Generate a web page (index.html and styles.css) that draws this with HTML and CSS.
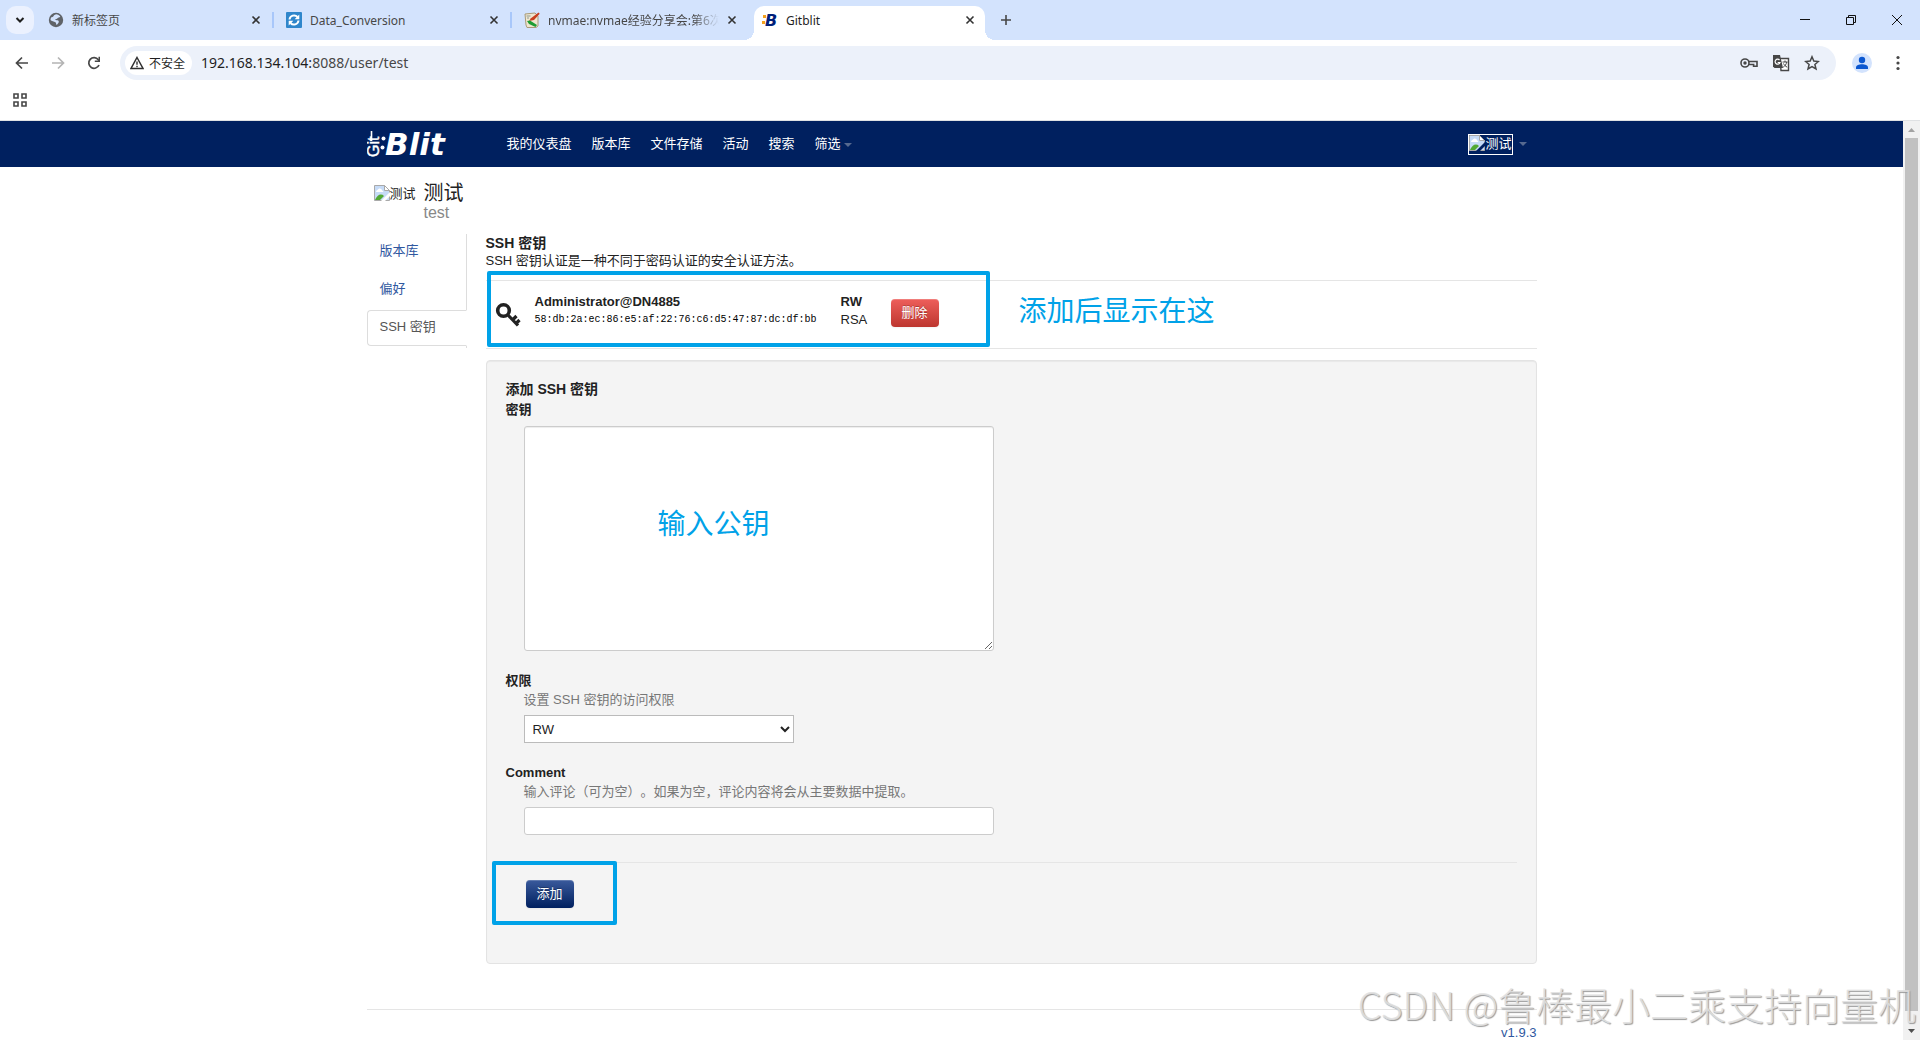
FILE: index.html
```html
<!DOCTYPE html>
<html lang="zh-CN">
<head>
    <meta charset="UTF-8">
    <meta name="viewport" content="width=device-width, initial-scale=1.0">
    <title>Gitblit</title>
    <link rel="stylesheet" href="styles.css">
</head>
<body>
    <!-- Browser window -->
    <div class="tab-strip">
        <button class="tab-search" aria-label="搜索标签页">
            <svg width="12" height="12" viewBox="0 0 12 12"><path d="M2.5 4l3.5 3.5L9.5 4" fill="none" stroke="#1f1f1f" stroke-width="2"/></svg>
        </button>
        <div class="tab">
            <svg width="16" height="16" viewBox="0 0 16 16"><circle cx="8" cy="8" r="7.2" fill="#5f6368"/><path d="M8 2.2c2 .3 3.400 1.200 4.300 2.300-.8 1.500-2.300.8-2.800 1.700-.4.900-1.900.6-2.500 1.300.8.900 2.600.4 3.500 1.300.9 1-.2 2.800-1.800 4.200-.8-.8-.4-2-1.300-2.700C6 9.500 3.500 9.300 2.500 8c0-1 .3-2 .8-2.800C5 5.500 5.500 4.200 6 3.300z" fill="#d3e3fd"/></svg>
            <span class="tab-title">新标签页</span>
            <button class="tab-close" aria-label="关闭"><svg width="10" height="10" viewBox="0 0 10 10"><path d="M1.500 1.500l7 7m0-7l-7 7"/></svg></button>
        </div>
        <div class="tab">
            <svg width="16" height="16" viewBox="0 0 16 16"><rect width="16" height="16" rx="1" fill="#2f86cb"/><path d="M3.500 7.500A4.600 4.600 0 0 1 11.500 5M12.500 8.500A4.600 4.600 0 0 1 4.500 11" fill="none" stroke="#fff" stroke-width="2"/><path d="M13.300 2.500v4.800H8.700zM2.700 13.500V8.700h4.600z" fill="#fff"/></svg>
            <span class="tab-title">Data_Conversion</span>
            <button class="tab-close" aria-label="关闭"><svg width="10" height="10" viewBox="0 0 10 10"><path d="M1.500 1.500l7 7m0-7l-7 7"/></svg></button>
        </div>
        <div class="tab before-active">
            <svg width="16" height="16" viewBox="0 0 16 16"><path d="M1 2l10-1 3 3v10l-2 1.500H3L2 13z" fill="#efe6cf" stroke="#a99b78"/><path d="M14.500.5l1.200 1.300L10 8l-5 1 2-2.800z" fill="#c8401f"/><path d="M3 9l3-.5 7 4.500-1.500 2L5 12z" fill="#1c9d35"/><path d="M2.500 4h4M3 6h2" stroke="#8c9a94"/></svg>
            <span class="tab-title fade">nvmae:nvmae经验分享会:第6次</span>
            <button class="tab-close" aria-label="关闭"><svg width="10" height="10" viewBox="0 0 10 10"><path d="M1.500 1.500l7 7m0-7l-7 7"/></svg></button>
        </div>
        <div class="tab active">
            <svg width="16" height="16" viewBox="0 0 16 16"><path d="M1 3h3v3H1zM0 9h3v3H0z" fill="#f5a11c"/><text x="3" y="14" class="favicon-letter">B</text></svg>
            <span class="tab-title">Gitblit</span>
            <button class="tab-close" aria-label="关闭"><svg width="10" height="10" viewBox="0 0 10 10"><path d="M1.500 1.500l7 7m0-7l-7 7"/></svg></button>
        </div>
        <button class="new-tab" aria-label="新标签页"><svg width="12" height="12" viewBox="0 0 12 12"><path d="M6 1v10M1 6h10" stroke="#474747" stroke-width="1.600"/></svg></button>
        <div class="window-buttons">
            <button aria-label="最小化"><svg width="12" height="12" viewBox="0 0 12 12"><path d="M1 5.500h10"/></svg></button>
            <button aria-label="还原"><svg width="12" height="12" viewBox="0 0 12 12"><path d="M1.500 3.500h7v7h-7zM3.500 3.500v-2h7v7h-2"/></svg></button>
            <button aria-label="关闭窗口"><svg width="12" height="12" viewBox="0 0 12 12"><path d="M1 1l10 10M11 1L1 11"/></svg></button>
        </div>
    </div>

    <div class="toolbar">
        <button aria-label="后退"><svg width="14" height="14" viewBox="0 0 14 14"><path d="M13 7H2M7 1.500L1.500 7 7 12.500" fill="none" stroke="#474747" stroke-width="1.700"/></svg></button>
        <button aria-label="前进"><svg width="14" height="14" viewBox="0 0 14 14"><path d="M1 7h11M7 1.500L12.500 7 7 12.500" fill="none" stroke="#b4b4b4" stroke-width="1.700"/></svg></button>
        <button aria-label="重新加载"><svg width="14" height="14" viewBox="0 0 14 14"><path d="M12 9A5.300 5.300 0 1 1 11.300 3.800L12.500 5" fill="none" stroke="#474747" stroke-width="1.700"/><path d="M13 .8V6H7.800V4.500h3.700V.8z" fill="#474747"/></svg></button>
        <div class="address-bar">
            <button class="security-chip">
                <svg width="14" height="14" viewBox="0 0 14 14"><path d="M7 1.500L13 12.500H1z" fill="none" stroke="#303030" stroke-width="1.500"/><path d="M7 5.500v3.300M7 9.800v1.400" stroke="#303030" stroke-width="1.400"/></svg>
                <span>不安全</span>
            </button>
            <span class="url">192.168.134.104:<span>8088/user/test</span></span>
            <div class="address-icons">
                <svg width="18" height="18" viewBox="0 0 18 18"><circle cx="5" cy="9" r="4" fill="none" stroke="#474747" stroke-width="1.600"/><circle cx="5" cy="9" r="1.700" fill="#474747"/><path d="M8.800 7.500H17v4.800h-3.400v-1.800h-4.800" fill="none" stroke="#474747" stroke-width="1.600"/></svg>
                <svg width="18" height="18" viewBox="0 0 18 18"><path d="M8 4.500h8.500v12H9z" fill="#fff" stroke="#474747" stroke-width="1.400"/><path d="M1 1h7l3 13H2.500L1 12.500z" fill="#474747"/><path d="M7.500 6A2.500 2.500 0 1 0 8 8.500H5.700" fill="none" stroke="#fff" stroke-width="1.200"/><path d="M10.500 8h5M13 6.500V8M14.800 8c-.5 2.300-1.800 4-3.600 5.200M11.500 9.500c.7 1.500 2 2.700 3.700 3.700" fill="none" stroke="#474747"/></svg>
                <svg width="16" height="16" viewBox="0 0 16 16"><path d="M8 1.800l1.800 4.300 4.600.4-3.500 3 1.100 4.500L8 11.600 4 14l1.100-4.500-3.500-3 4.600-.4z" fill="none" stroke="#474747" stroke-width="1.500"/></svg>
            </div>
        </div>
        <button class="avatar" aria-label="用户"><svg width="20" height="20" viewBox="0 0 20 20"><circle cx="10" cy="10" r="10" fill="#d3e3fd"/><circle cx="10" cy="7" r="3.200" fill="#0b57d0"/><path d="M4 16v-1.500c0-2 3-3.200 6-3.200s6 1.200 6 3.200V16z" fill="#0b57d0"/></svg></button>
        <button class="menu" aria-label="菜单"><svg width="4" height="16" viewBox="0 0 4 16" fill="#474747"><circle cx="2" cy="2.500" r="1.600"/><circle cx="2" cy="8" r="1.600"/><circle cx="2" cy="13.500" r="1.600"/></svg></button>
    </div>

    <div class="bookmarks">
        <svg width="14" height="14" viewBox="0 0 14 14"><path d="M1 1h4v4H1zM9 1h4v4H9zM1 9h4v4H1zM9 9h4v4H9z" fill="none" stroke="#474747" stroke-width="1.600"/></svg>
    </div>

    <div class="viewport">
        <div class="page">
            <div class="navbar">
                <div class="container">
                    <a class="brand" href="#" aria-label="GitBlit">
                        <svg width="82" height="30" viewBox="0 0 82 30">
                            <text class="brand-git" transform="translate(12 28) rotate(-90)">Git</text>
                            <path d="M4.500 2v10" stroke="#fff" stroke-width="1.600"/>
                            <circle cx="16.500" cy="9.500" r="2" fill="#fff"/>
                            <circle cx="15.500" cy="18.500" r="2" fill="#fff"/>
                            <text class="brand-blit" x="18" y="26">Blit</text>
                        </svg>
                    </a>
                    <nav>
                        <a href="#">我的仪表盘</a>
                        <a href="#">版本库</a>
                        <a href="#">文件存储</a>
                        <a href="#">活动</a>
                        <a href="#">搜索</a>
                        <a href="#">筛选<b class="caret"></b></a>
                    </nav>
                    <a class="user-menu" href="#">
                        <span class="user-image">
                            <svg width="16" height="16" viewBox="0 0 16 16"><path d="M.5.500h10l5 5v10H.500z" fill="#c6dbf7" stroke="#a9a9a9"/><path d="M2 7c0-2 2-2 2.500-3C6 3 8 4 8 5.500c1.500 0 1.500 1.500 1 1.500z" fill="#fff"/><path d="M1 15c2-5 6-7 9-4l-4 4z" fill="#52a934"/><path d="M16 7v4l-5 5H7z" fill="#00205f"/><path d="M10.500.500v5h5z" fill="#fff" stroke="#a9a9a9"/></svg>测试</span>
                        <b class="caret"></b>
                    </a>
                </div>
            </div>

            <div class="container">
                <div class="profile">
                    <div class="profile-image">
                        <svg width="16" height="16" viewBox="0 0 16 16"><path d="M.5.500h10l5 5v10H.500z" fill="#c6dbf7" stroke="#a9a9a9"/><path d="M2 7c0-2 2-2 2.500-3C6 3 8 4 8 5.500c1.500 0 1.500 1.500 1 1.500z" fill="#fff"/><path d="M1 15c2-5 6-7 9-4l-4 4z" fill="#52a934"/><path d="M16 7v4l-5 5H7z" fill="#fff"/><path d="M10.500.500v5h5z" fill="#fff" stroke="#a9a9a9"/></svg>测试</div>
                    <div>
                        <div class="display-name">测试</div>
                        <div class="username">test</div>
                    </div>
                </div>

                <div class="columns">
                    <div class="side-tabs">
                        <a href="#">版本库</a>
                        <a href="#">偏好</a>
                        <a class="current" href="#">SSH 密钥</a>
                    </div>

                    <div class="main">
                        <h4>SSH 密钥</h4>
                        <p>SSH 密钥认证是一种不同于密码认证的安全认证方法。</p>

                        <div class="keys">
                            <table>
                                <tr>
                                    <td class="key-icon"><svg width="26" height="26" viewBox="0 0 26 26"><circle cx="8.500" cy="8.500" r="5.800" fill="none" stroke="#222" stroke-width="3.600"/><path d="M12.500 12.500l10.500 11M17.500 18l4-4M21 21.500l3.500-3.500" fill="none" stroke="#222" stroke-width="3.200"/></svg></td>
                                    <td class="key-name"><strong>Administrator@DN4885</strong><code>58:db:2a:ec:86:e5:af:22:76:c6:d5:47:87:dc:df:bb</code></td>
                                    <td class="key-type"><strong>RW</strong><span>RSA</span></td>
                                    <td class="key-action"><button class="btn btn-danger">删除</button></td>
                                </tr>
                            </table>
                            <div class="mark mark-key"></div>
                            <div class="note note-key">添加后显示在这</div>
                        </div>

                        <form class="well">
                            <h4>添加 SSH 密钥</h4>
                            <div class="field">
                                <label for="key">密钥</label>
                                <div class="controls">
                                    <textarea id="key"></textarea>
                                    <div class="note note-input">输入公钥</div>
                                </div>
                            </div>
                            <div class="field">
                                <label for="permission">权限</label>
                                <div class="controls">
                                    <span class="help">设置 SSH 密钥的访问权限</span>
                                    <select id="permission"><option>RW</option></select>
                                </div>
                            </div>
                            <div class="field">
                                <label for="comment">Comment</label>
                                <div class="controls">
                                    <span class="help">输入评论（可为空）。如果为空，评论内容将会从主要数据中提取。</span>
                                    <input id="comment" type="text">
                                </div>
                            </div>
                            <div class="form-actions">
                                <button class="btn btn-primary" type="button">添加</button>
                                <div class="mark mark-add"></div>
                            </div>
                        </form>
                    </div>
                </div>

                <footer><a href="#">v1.9.3</a></footer>
            </div>
        </div>

        <div class="scrollbar">
            <svg width="17" height="17" viewBox="0 0 17 17"><path d="M5 11l3.500-4 3.500 4z" fill="#a3a3a3"/></svg>
            <div class="thumb"></div>
            <svg class="down" width="17" height="17" viewBox="0 0 17 17"><path d="M5 6l3.500 4L12 6z" fill="#505050"/></svg>
        </div>
    </div>

    <div class="watermark">CSDN @鲁棒最小二乘支持向量机</div>
</body>
</html>
```
FILE: styles.css
```css
/* Global Styles */
* {
    box-sizing: border-box;
}

body {
    margin: 0;
    height: 100vh;
    display: flex;
    flex-direction: column;
    overflow: hidden;
    position: relative;
    background: #fff;
    color: #222;
    font: 13px/18px "Liberation Sans", "Noto Sans CJK SC", sans-serif;
    text-spacing-trim: space-all;
}

a {
    color: #2f58a0;
    text-decoration: none;
}

button {
    font: inherit;
    padding: 0;
    border: 0;
    background: none;
    cursor: pointer;
}

svg {
    flex: none;
}

h4, p {
    margin: 0;
    font-size: 13px;
    line-height: 18px;
}

h4 {
    font-size: 14px;
}

/* Tab strip */
.tab-strip {
    display: flex;
    align-items: center;
    flex: none;
    height: 40px;
    padding-left: 6px;
    background: #d3e3fd;
    font: 12px/18px "Noto Sans", "Noto Sans CJK SC", sans-serif;
    color: #474747;
}

.tab-search {
    display: flex;
    align-items: center;
    justify-content: center;
    width: 28px;
    height: 28px;
    margin-right: 2px;
    border-radius: 10px;
    background: #ebf1fe;
}

.tab {
    display: flex;
    align-items: center;
    gap: 8px;
    width: 238px;
    height: 16px;
    padding: 0 11px 0 12px;
    border-right: 2px solid #a8c7fa;
}

.tab.before-active {
    border-color: transparent;
}

.tab.active {
    position: relative;
    width: 231px;
    height: 34px;
    align-self: flex-end;
    margin-left: 4px;
    padding: 0 10px 6px 8px;
    border: 0;
    border-radius: 10px 10px 0 0;
    background: #fff;
    color: #1f1f1f;
}

.tab.active::before, .tab.active::after {
    content: "";
    position: absolute;
    bottom: 0;
    left: -10px;
    width: 10px;
    height: 10px;
    background: radial-gradient(circle at 0 0, #d3e3fd 10px, #fff 10px);
}

.tab.active::after {
    left: auto;
    right: -10px;
    background: radial-gradient(circle at 100% 0, #d3e3fd 10px, #fff 10px);
}

.tab-title {
    flex: 1;
    padding-top: 1px;
    overflow: hidden;
    white-space: nowrap;
}

.tab-title.fade {
    -webkit-mask-image: linear-gradient(90deg, #000 85%, transparent);
    mask-image: linear-gradient(90deg, #000 85%, transparent);
}

.tab-close {
    display: flex;
}

.tab-close path {
    fill: none;
    stroke: #333;
    stroke-width: 1.6;
}

.favicon-letter {
    font: italic bold 16px "DejaVu Sans", sans-serif;
    fill: #00207a;
}

.new-tab {
    display: flex;
    margin-left: 15px;
}

.window-buttons {
    display: flex;
    margin-left: auto;
}

.window-buttons button {
    display: flex;
    align-items: center;
    justify-content: center;
    width: 46px;
    height: 40px;
}

.window-buttons path {
    fill: none;
    stroke: #111;
}

/* Toolbar */
.toolbar {
    display: flex;
    align-items: center;
    flex: none;
    height: 46px;
    padding: 0 4px;
}

.toolbar > button {
    display: flex;
    align-items: center;
    justify-content: center;
    width: 36px;
    height: 34px;
}

.address-bar {
    display: flex;
    align-items: center;
    flex: 1;
    height: 34px;
    margin-left: 8px;
    padding: 0 16px 0 5px;
    border-radius: 17px;
    background: #ecf1fa;
}

.security-chip {
    display: flex;
    align-items: center;
    gap: 5px;
    height: 24px;
    padding: 0 7px 0 5px;
    border-radius: 12px;
    background: #fff;
    font: 12px/16px "Noto Sans CJK SC", sans-serif;
    color: #1f1f1f;
}

.url {
    margin-left: 9px;
    font: 14px/20px "Noto Sans", sans-serif;
    color: #1f1f1f;
}

.url span {
    color: #474747;
}

.address-icons {
    display: flex;
    align-items: center;
    gap: 14px;
    margin-left: auto;
}

.toolbar .avatar {
    margin-left: 8px;
}

/* Bookmarks */
.bookmarks {
    display: flex;
    align-items: center;
    flex: none;
    height: 35px;
    padding: 0 13px 6px;
    border-bottom: 1px solid #dfe1e3;
}

/* Page */
.viewport {
    display: flex;
    flex: 1;
    min-height: 0;
}

.page {
    flex: 1;
    overflow: hidden;
}

.container {
    width: 100%;
    max-width: 1170px;
    margin: 0 auto;
}

.scrollbar {
    display: flex;
    flex-direction: column;
    width: 17px;
    background: #f1f1f1;
}

.scrollbar .thumb {
    flex: 1;
    margin: 0 2px 12px;
    background: #c1c1c1;
}

/* Navbar */
.navbar {
    background: #00205f;
}

.navbar .container {
    display: flex;
    align-items: center;
    height: 46px;
}

.brand {
    display: flex;
    margin-right: 48px;
}

.brand-git {
    font: 16px "Liberation Sans", sans-serif;
    fill: #fff;
    stroke: #fff;
    stroke-width: 0.4px;
}

.brand-blit {
    font: italic bold 31px "DejaVu Sans", sans-serif;
    fill: #fff;
}

nav {
    display: flex;
}

nav a {
    padding: 0 10px;
    color: #fff;
}

.caret {
    display: inline-block;
    margin-left: 3px;
    border: 4px solid transparent;
    border-top-color: #56698f;
    border-bottom: 0;
    vertical-align: middle;
}

.user-menu {
    display: flex;
    align-items: center;
    gap: 3px;
    margin-left: auto;
    padding-right: 10px;
}

.user-image {
    display: flex;
    height: 21px;
    border: 1px solid #fff;
    color: #fff;
}

/* Profile */
.profile {
    display: flex;
    gap: 8px;
    padding: 16px 7px 11px;
}

.profile-image {
    display: flex;
    padding-top: 2px;
}

.display-name {
    font-size: 20px;
    line-height: 20px;
}

.username {
    font-size: 16px;
    line-height: 20px;
    color: #888;
}

/* Side tabs */
.columns {
    display: flex;
    align-items: flex-start;
    gap: 19px;
}

.side-tabs {
    display: flex;
    flex-direction: column;
    width: 100px;
    padding-bottom: 2px;
    border-right: 1px solid #ddd;
}

.side-tabs a {
    height: 36px;
    margin-bottom: 2px;
    padding: 8px 13px;
}

.side-tabs .current {
    margin: 0 -1px 0 0;
    padding: 7px 12px;
    border: 1px solid #ddd;
    border-right-color: #fff;
    border-radius: 4px 0 0 4px;
    background: #fff;
    color: #555;
}

.main {
    flex: 1;
}

/* Key list */
.keys {
    position: relative;
    margin: 10px 0 11px;
}

.keys table {
    width: 100%;
    height: 69px;
    border-collapse: collapse;
    border-top: 1px solid #e5e5e5;
    border-bottom: 1px solid #e5e5e5;
}

.keys td {
    padding: 0;
    vertical-align: middle;
}

.keys strong, .keys code, .keys td span {
    display: block;
}

.keys code {
    font: 10px/18px "Liberation Mono", monospace;
    color: #000;
}

.keys .key-icon {
    width: 49px;
    padding-left: 9px;
}

.keys .key-icon svg {
    display: block;
}

.keys .key-name {
    width: 306px;
    padding-bottom: 7px;
}

.keys .key-type {
    width: 50px;
    padding-bottom: 8px;
}

.keys .key-action {
    padding-bottom: 4px;
}

.btn {
    height: 28px;
    padding: 0 11px;
    border-radius: 4px;
    color: #fff;
    text-shadow: 0 -1px 0 rgba(0, 0, 0, 0.25);
    box-shadow: inset 0 1px 0 rgba(255, 255, 255, 0.2), 0 1px 2px rgba(0, 0, 0, 0.05);
}

.btn-danger {
    background: linear-gradient(#ee5f5b, #bd362f);
}

.btn-primary {
    background: linear-gradient(#3a5a9c, #00205f);
}

/* Highlights and notes */
.mark {
    position: absolute;
    border: 4px solid #00a2e8;
    border-radius: 2px;
}

.mark-key {
    top: -9px;
    left: 1px;
    width: 503px;
    height: 76px;
}

.mark-add {
    top: -2px;
    left: -14px;
    width: 125px;
    height: 64px;
}

.note {
    position: absolute;
    font: 28px/32px "Noto Sans CJK SC", sans-serif;
    color: #00a2e8;
    pointer-events: none;
}

.note-key {
    top: 13px;
    left: 533px;
}

.note-input {
    top: 80px;
    left: 134px;
}

/* Add key form */
.well {
    padding: 19px 19px 55px;
    border: 1px solid #e3e3e3;
    border-radius: 4px;
    background: #f4f4f4;
    box-shadow: inset 0 1px 1px rgba(0, 0, 0, 0.05);
}

.well h4 {
    margin-bottom: 2px;
}

.field {
    margin-bottom: 20px;
}

.field label {
    display: block;
    line-height: 20px;
    font-weight: bold;
}

.controls {
    position: relative;
    margin-left: 18px;
}

.help {
    display: block;
    color: #777;
}

textarea, select, input {
    display: block;
    width: 470px;
    height: 28px;
    margin-top: 6px;
    padding: 4px 6px;
    border: 1px solid #ccc;
    border-radius: 3px;
    background: #fff;
    font: inherit;
    color: #222;
}

textarea {
    height: 225px;
    box-shadow: inset 0 1px 1px rgba(0, 0, 0, 0.075);
}

select {
    width: 270px;
    padding: 4px;
    border-color: #bbb;
    border-radius: 0;
}

.form-actions {
    position: relative;
    margin-top: 27px;
    padding: 17px 20px 0;
    border-top: 1px solid #e5e5e5;
}

/* Footer */
footer {
    margin-top: 45px;
    padding-top: 14px;
    border-top: 1px solid #e5e5e5;
    text-align: right;
}

.watermark {
    position: absolute;
    right: 4px;
    bottom: 16px;
    font: 300 38px/40px "Noto Sans CJK SC", sans-serif;
    color: rgba(225, 225, 225, 0.9);
    text-shadow: 1px 1px 1px #999;
    white-space: nowrap;
    pointer-events: none;
}
```
